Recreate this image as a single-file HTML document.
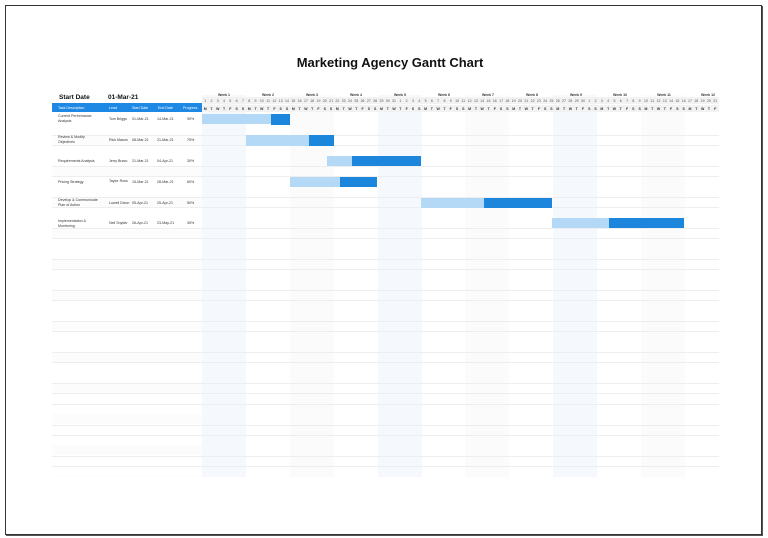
<!DOCTYPE html>
<html><head><meta charset="utf-8"><style>
*{margin:0;padding:0;box-sizing:border-box}
body{width:768px;height:538px;background:#fff;font-family:"Liberation Sans",sans-serif;position:relative;overflow:hidden}
.frame{position:absolute;left:5px;top:5px;width:757px;height:530px;border:1px solid #333;box-shadow:1px 1px 0 #555}
.title{position:absolute;top:55px;left:0;width:780px;text-align:center;font-size:13px;font-weight:bold;color:#111}
.abs{position:absolute}
.band{position:absolute;top:95px;height:382px;width:44px}
.hl{position:absolute;left:52px;width:667px;height:1px;background:#eee}
.row{display:flex;position:absolute;left:202px;font-size:3.5px;color:#555}
.row span{width:6.3px;text-align:center;flex:none}
.t{position:absolute;font-size:3.6px;color:#333}
.bar{position:absolute;height:10px}
.lb{background:#b4d9f6}.db{background:#1c86dc}
</style></head><body>
<div class="frame"></div>
<div class="title">Marketing Agency Gantt Chart</div>

<div class="abs" style="left:52px;top:114px;width:150px;height:363px;background:repeating-linear-gradient(#fff 0 21px,#fcfcfc 21px 31px)"></div>

<div class="band" style="left:202px;background:#f5f9fd"></div>
<div class="band" style="left:290px;background:#fbfbfb"></div>
<div class="band" style="left:378px;background:#f5f9fd"></div>
<div class="band" style="left:465px;background:#fbfbfb"></div>
<div class="band" style="left:553px;background:#f5f9fd"></div>
<div class="band" style="left:641px;background:#fbfbfb"></div>

<div class="abs" style="left:202px;top:97px;width:517px;height:7px;background:#f2f2f2"></div>
<div class="abs" style="left:202px;top:105px;width:517px;height:7px;background:#f2f2f2"></div>

<div class="abs" style="left:59px;top:94px;font-size:6.5px;font-weight:bold;color:#111">Start Date</div>
<div class="abs" style="left:108px;top:94px;font-size:6.5px;font-weight:bold;color:#111">01-Mar-21</div>

<div class="abs" style="left:52px;top:103px;width:150px;height:9px;background:#1e88e5"></div>
<div class="t" style="left:58px;top:105.5px;color:#fff">Task Description</div>
<div class="t" style="left:109px;top:105.5px;color:#fff">Lead</div>
<div class="t" style="left:132px;top:105.5px;color:#fff">Start Date</div>
<div class="t" style="left:158px;top:105.5px;color:#fff">End Date</div>
<div class="t" style="left:183px;top:105.5px;color:#fff">Progress</div>

<div class="row" style="top:92.5px;font-weight:bold;color:#333">
<span style="width:44px">Week 1</span><span style="width:44px">Week 2</span><span style="width:44px">Week 3</span><span style="width:44px">Week 4</span><span style="width:44px">Week 5</span><span style="width:44px">Week 6</span><span style="width:44px">Week 7</span><span style="width:44px">Week 8</span><span style="width:44px">Week 9</span><span style="width:44px">Week 10</span><span style="width:44px">Week 11</span><span style="width:44px">Week 12</span>
</div>
<div class="row" style="top:98.5px">
<span>1</span><span>2</span><span>3</span><span>4</span><span>5</span><span>6</span><span>7</span><span>8</span><span>9</span><span>10</span><span>11</span><span>12</span><span>13</span><span>14</span><span>15</span><span>16</span><span>17</span><span>18</span><span>19</span><span>20</span><span>21</span><span>22</span><span>23</span><span>24</span><span>25</span><span>26</span><span>27</span><span>28</span><span>29</span><span>30</span><span>31</span><span>1</span><span>2</span><span>3</span><span>4</span><span>5</span><span>6</span><span>7</span><span>8</span><span>9</span><span>10</span><span>11</span><span>12</span><span>13</span><span>14</span><span>15</span><span>16</span><span>17</span><span>18</span><span>19</span><span>20</span><span>21</span><span>22</span><span>23</span><span>24</span><span>25</span><span>26</span><span>27</span><span>28</span><span>29</span><span>30</span><span>1</span><span>2</span><span>3</span><span>4</span><span>5</span><span>6</span><span>7</span><span>8</span><span>9</span><span>10</span><span>11</span><span>12</span><span>13</span><span>14</span><span>15</span><span>16</span><span>17</span><span>18</span><span>19</span><span>20</span><span>21</span>
</div>
<div class="row" style="top:106.5px;font-weight:bold;color:#333">
<span>M</span><span>T</span><span>W</span><span>T</span><span>F</span><span>S</span><span>S</span><span>M</span><span>T</span><span>W</span><span>T</span><span>F</span><span>S</span><span>S</span><span>M</span><span>T</span><span>W</span><span>T</span><span>F</span><span>S</span><span>S</span><span>M</span><span>T</span><span>W</span><span>T</span><span>F</span><span>S</span><span>S</span><span>M</span><span>T</span><span>W</span><span>T</span><span>F</span><span>S</span><span>S</span><span>M</span><span>T</span><span>W</span><span>T</span><span>F</span><span>S</span><span>S</span><span>M</span><span>T</span><span>W</span><span>T</span><span>F</span><span>S</span><span>S</span><span>M</span><span>T</span><span>W</span><span>T</span><span>F</span><span>S</span><span>S</span><span>M</span><span>T</span><span>W</span><span>T</span><span>F</span><span>S</span><span>S</span><span>M</span><span>T</span><span>W</span><span>T</span><span>F</span><span>S</span><span>S</span><span>M</span><span>T</span><span>W</span><span>T</span><span>F</span><span>S</span><span>S</span><span>M</span><span>T</span><span>W</span><span>T</span><span>F</span>
</div>

<div class="hl" style="top:135px"></div><div class="hl" style="top:145px"></div>
<div class="hl" style="top:166px"></div><div class="hl" style="top:176px"></div>
<div class="hl" style="top:197px"></div><div class="hl" style="top:207px"></div>
<div class="hl" style="top:228px"></div><div class="hl" style="top:238px"></div>
<div class="hl" style="top:259px"></div><div class="hl" style="top:269px"></div>
<div class="hl" style="top:290px"></div><div class="hl" style="top:300px"></div>
<div class="hl" style="top:321px"></div><div class="hl" style="top:331px"></div>
<div class="hl" style="top:352px"></div><div class="hl" style="top:362px"></div>
<div class="hl" style="top:383px"></div><div class="hl" style="top:393px"></div>
<div class="hl" style="top:404px"></div><div class="hl" style="top:425px"></div>
<div class="hl" style="top:435px"></div><div class="hl" style="top:456px"></div>
<div class="hl" style="top:466px"></div>

<div class="t" style="left:58px;top:114px;line-height:4.5px">Current Performance<br>Analysis</div>
<div class="t" style="left:109px;top:116.5px">Tom Briggs</div><div class="t" style="left:132px;top:116.5px">01-Mar-21</div><div class="t" style="left:157px;top:116.5px">14-Mar-21</div><div class="t" style="left:187px;top:116.5px">90%</div>

<div class="t" style="left:58px;top:135px;line-height:4.5px">Review &amp; Modify<br>Objectives</div>
<div class="t" style="left:109px;top:137.5px">Rick Mason</div><div class="t" style="left:132px;top:137.5px">08-Mar-21</div><div class="t" style="left:157px;top:137.5px">21-Mar-21</div><div class="t" style="left:187px;top:137.5px">75%</div>

<div class="t" style="left:58px;top:158.5px">Requirements Analysis</div>
<div class="t" style="left:109px;top:158.5px">Jerry Bravo</div><div class="t" style="left:132px;top:158.5px">21-Mar-21</div><div class="t" style="left:157px;top:158.5px">04-Apr-21</div><div class="t" style="left:187px;top:158.5px">30%</div>

<div class="t" style="left:58px;top:179.5px">Pricing Strategy</div>
<div class="t" style="left:109px;top:178.5px">Taylor Ross</div><div class="t" style="left:132px;top:179.5px">15-Mar-21</div><div class="t" style="left:157px;top:179.5px">28-Mar-21</div><div class="t" style="left:187px;top:179.5px">60%</div>

<div class="t" style="left:58px;top:198px;line-height:4.5px">Develop &amp; Communicate<br>Plan of Action</div>
<div class="t" style="left:109px;top:200.5px">Lowell Dixon</div><div class="t" style="left:132px;top:200.5px">05-Apr-21</div><div class="t" style="left:157px;top:200.5px">25-Apr-21</div><div class="t" style="left:187px;top:200.5px">50%</div>

<div class="t" style="left:58px;top:219px;line-height:4.5px">Implementation &amp;<br>Monitoring</div>
<div class="t" style="left:109px;top:221px">Neil Snyder</div><div class="t" style="left:132px;top:221px">26-Apr-21</div><div class="t" style="left:157px;top:221px">23-May-21</div><div class="t" style="left:187px;top:221px">35%</div>

<div class="bar lb" style="left:202px;top:114px;width:69px"></div><div class="bar db" style="left:271px;top:114px;width:19px;height:11px"></div>
<div class="bar lb" style="left:246px;top:135px;width:63px;height:11px"></div><div class="bar db" style="left:309px;top:135px;width:25px;height:11px"></div>
<div class="bar lb" style="left:327px;top:156px;width:25px"></div><div class="bar db" style="left:352px;top:156px;width:69px"></div>
<div class="bar lb" style="left:290px;top:177px;width:50px"></div><div class="bar db" style="left:340px;top:177px;width:37px"></div>
<div class="bar lb" style="left:421px;top:198px;width:63px"></div><div class="bar db" style="left:484px;top:198px;width:68px"></div>
<div class="bar lb" style="left:552px;top:218px;width:57px"></div><div class="bar db" style="left:609px;top:218px;width:75px"></div>
</body></html>
